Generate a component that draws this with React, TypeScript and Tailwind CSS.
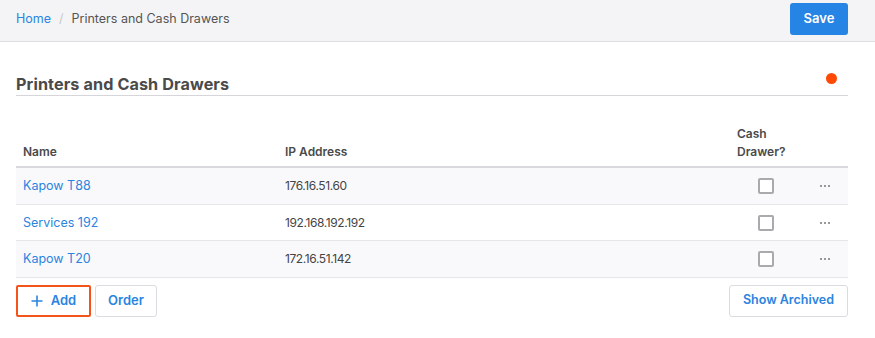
import React from "react";

const rows = [
  { name: "Kapow T88", ip: "176.16.51.60" },
  { name: "Services 192", ip: "192.168.192.192" },
  { name: "Kapow T20", ip: "172.16.51.142" },
];

export default function App() {
  return (
    <div
      className="w-[875px] h-[338px] bg-white text-[#444] overflow-hidden"
      style={{ fontFamily: "Inter, 'Noto Sans', sans-serif" }}
    >
      <div className="h-[42px] bg-[#f4f4f6] border-b border-[#dfdfe3] flex items-center justify-between pl-[16px] pr-[27px]">
        <div className="flex items-center text-[12.5px] mt-[-2px]">
          <span className="text-[#2a84e0]">Home</span>
          <span className="text-[#c8c8cc] mx-[8px]">/</span>
          <span className="text-[#555]">Printers and Cash Drawers</span>
        </div>
        <button className="w-[58px] h-[32px] mt-[-3px] rounded-[3px] bg-[#2684e4] text-white text-[13px] font-semibold">
          Save
        </button>
      </div>

      <div className="px-[16px] pr-[27px]">
        <div className="flex items-end justify-between h-[54px] border-b border-[#d6d6da] pb-0">
          <h1 className="text-[16.2px] font-bold text-[#4a4a4a] tracking-[0.1px] mb-[-1px]">Printers and Cash Drawers</h1>
          <span className="w-[11px] h-[11px] rounded-full bg-[#ff4a06] mr-[11px] mb-[11px]"></span>
        </div>

        <div className="mt-[28px]">
          <div className="flex items-end h-[44px] border-b-2 border-[#d9d9dd] text-[12px] font-semibold text-[#4a4a4a] pb-[5px]">
            <div className="w-[262px] pl-[7px]">Name</div>
            <div className="w-[452px] pl-[7px]">IP Address</div>
            <div className="w-[80px] leading-[18px] pl-[7px]">
              Cash
              <br />
              Drawer?
            </div>
          </div>
          {rows.map((r, i) => (
            <div
              key={r.name}
              className={`flex items-center h-[36.6px] pt-[1px] border-b border-[#e6e6ea] text-[12px] ${i % 2 === 1 ? "bg-white" : "bg-[#f9f9fb]"}`}
            >
              <div className="w-[262px] pl-[7px] text-[#2a84e0] text-[12.5px]">{r.name}</div>
              <div className="w-[480px] pl-[7px] text-[#444] tracking-[-0.4px]">{r.ip}</div>
              <div className="w-[62px] flex">
                <span className="w-[16px] h-[16px] border-2 border-[#a9a9ae] rounded-[2px] bg-white"></span>
              </div>
              <div className="flex gap-[2px] items-center">
                <span className="w-[2px] h-[2px] rounded-full bg-[#777]"></span>
                <span className="w-[2px] h-[2px] rounded-full bg-[#777]"></span>
                <span className="w-[2px] h-[2px] rounded-full bg-[#777]"></span>
              </div>
            </div>
          ))}
          <div className="flex items-center justify-between mt-[7px]">
            <div className="flex gap-[4px]">
              <button className="w-[75px] h-[32px] border-2 border-[#f2541b] rounded-[2px] bg-white text-[#2a84e0] text-[13px] font-semibold flex items-center justify-center gap-[8px]">
                <svg width="12" height="12" viewBox="0 0 12 12" stroke="#2a84e0" strokeWidth="1.6" fill="none">
                  <path d="M6 0.5V11.5M0.5 6H11.5" />
                </svg>
                Add
              </button>
              <button className="w-[62px] h-[32px] border border-[#dcdce0] rounded-[3px] bg-white text-[#2a84e0] text-[13px] font-semibold">
                Order
              </button>
            </div>
            <button className="w-[119px] h-[32px] border border-[#dcdce0] rounded-[3px] bg-white text-[#2a84e0] text-[12.5px] font-semibold">
              Show Archived
            </button>
          </div>
        </div>
      </div>
    </div>
  );
}
